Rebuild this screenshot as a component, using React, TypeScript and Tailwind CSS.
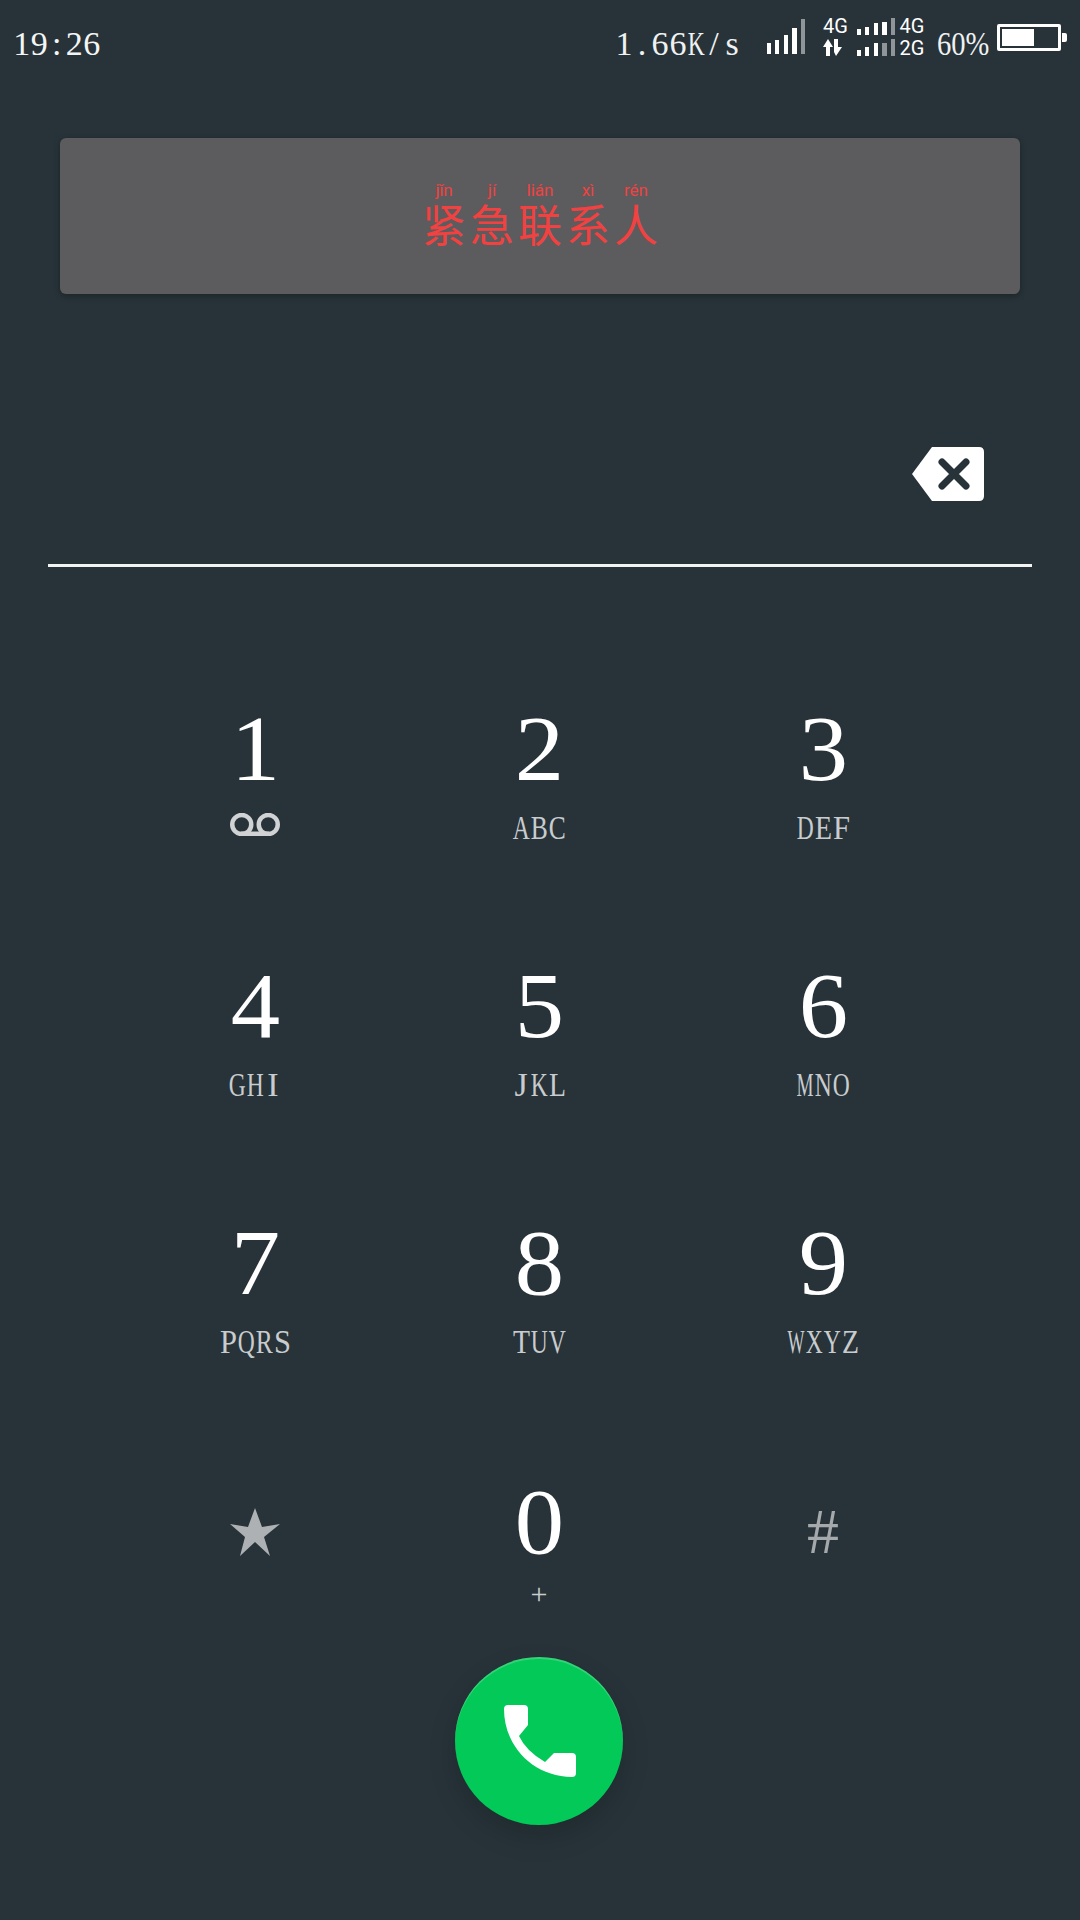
const letterWidths: Record<string, number> = {
  A: 0.722, B: 0.667, C: 0.667, D: 0.722, E: 0.611, F: 0.556, G: 0.722, H: 0.722, I: 0.333, J: 0.389, K: 0.722, L: 0.611, M: 0.889,
  N: 0.722, O: 0.722, P: 0.556, Q: 0.722, R: 0.667, S: 0.556, T: 0.611, U: 0.722, V: 0.722, W: 0.944, X: 0.722, Y: 0.722, Z: 0.611,
};

const Cells = ({ text, w, size }: { text: string; w: number; size: number }) => (
  <span className="inline-flex">
    {text.split("").map((c, i) => {
      const natural = (letterWidths[c] ?? 0) * size;
      const sx = natural > w - 1 ? (w - 1) / natural : 1;
      return (
        <span key={i} className="flex justify-center" style={{ width: w }}>
          <span className="inline-block" style={{ transform: `scaleX(${sx})` }}>{c}</span>
        </span>
      );
    })}
  </span>
);

const Bars = ({ width, height, bars }: { width: number; height: number; bars: [number, number, number, string][] }) => (
  <svg width={width} height={height} viewBox={`0 0 ${width} ${height}`} className="block">
    {bars.map(([x, y, w, f], i) => (
      <rect key={i} x={x} y={y} width={w} height={height - y} fill={f} />
    ))}
  </svg>
);

const Status = () => (
  <div className="flex h-[88px] items-start text-white font-['Liberation_Serif',serif]">
    <div className="ml-[13px] mt-[25px] text-[34px] leading-[38px] text-[#f4f5f5]">
      <Cells text="19:26" w={17.5} size={34} />
    </div>
    <div className="ml-auto flex items-start">
      <div className="mt-[25px] mr-[26px] text-[34px] leading-[38px] text-[#f0f1f1]">
        <Cells text="1.66K/s" w={18} size={34} />
      </div>
      <div className="mt-[19px] mr-[18px]">
        <Bars width={38} height={35} bars={[[0,24,4,"#fff"],[8,21,4,"#fff"],[17,16,4,"#fff"],[25,9,5,"#fff"],[34,0,4,"#8f9599"]]} />
      </div>
      <div className="mt-[15px] mr-[9px] flex w-[25px] flex-col items-center">
        <span className="font-['Roboto',sans-serif] text-[20px] leading-[22px] font-normal">4G</span>
        <svg width="19" height="17" viewBox="0 0 19 17" className="mt-[2px] block self-start">
          <path d="M5 0 L10 8 H7 V17 H3 V8 H0 Z" fill="#fff" />
          <path d="M11 0 H15 V8 H19 L13 17 L11 13 Z" fill="#fff" />
        </svg>
      </div>
      <div className="mt-[18px] mr-[5px] flex flex-col gap-[4px]">
        <Bars width={38} height={17} bars={[[0,11,4,"#fff"],[8,9,4,"#fff"],[17,5,4,"#fff"],[25,4,5,"#fff"],[34,0,4,"#8f9599"]]} />
        <Bars width={38} height={17} bars={[[0,11,4,"#fff"],[8,8,4,"#fff"],[17,4,4,"#fff"],[25,4,5,"#8f9599"],[34,0,4,"#8f9599"]]} />
      </div>
      <div className="mt-[15px] mr-[13px] flex w-[24px] flex-col items-center font-['Roboto',sans-serif] text-[20px] leading-[22px] font-normal">
        <span>4G</span>
        <span>2G</span>
      </div>
      <div className="mt-[25px] mr-[8px] w-[52px] whitespace-nowrap text-[34px] leading-[38px] text-[#f0f1f1]">
        <span className="inline-block origin-left scale-x-[0.84]">60%</span>
      </div>
      <div className="mt-[24px] mr-[13px] flex items-center">
        <div className="h-[27px] w-[64px] rounded-[2px] border-[3px] border-white p-[2px]">
          <div className="h-full w-[32px] bg-white" />
        </div>
        <div className="ml-[1px] h-[9px] w-[5px] rounded-r-[2px] bg-white" />
      </div>
    </div>
  </div>
);

const Banner = () => (
  <div className="mx-[60px] mt-[50px] flex h-[156px] items-start justify-center rounded-[6px] bg-[#5c5c5e] pt-[43px] shadow-[0_2px_6px_rgba(0,0,0,0.3)]">
    {[["紧","jǐn"],["急","jí"],["联","lián"],["系","xì"],["人","rén"]].map(([h, p]) => (
      <div key={h} className="flex w-[48px] flex-col items-center text-[#f14141]">
        <span className="font-['Roboto',sans-serif] text-[17px] leading-[18px] whitespace-nowrap">{p}</span>
        <span className="font-['Noto_Sans_CJK_SC',sans-serif] text-[44px] leading-[48px]">{h}</span>
      </div>
    ))}
  </div>
);

const Backspace = () => (
  <div className="mt-[153px] flex justify-end pr-[96px]">
    <svg width="72" height="54" viewBox="0 0 72 54" className="block">
      <path d="M20 0 H67 Q72 0 72 5 V49 Q72 54 67 54 H20 L0 27 Z" fill="#fff" />
      <path d="M30 15 L54 39 M54 15 L30 39" stroke="#273339" strokeWidth="7" strokeLinecap="round" fill="none" />
    </svg>
  </div>
);

const Digit = ({ d }: { d: string }) => (
  <div className="h-[104px] text-center font-['Liberation_Serif',serif] text-[94px] leading-[108px] text-white">
    <span className="inline-block scale-x-[1.05]">{d}</span>
  </div>
);

const Label = ({ t }: { t: string }) => (
  <div className="mt-[12px] h-[36px] whitespace-nowrap font-['Liberation_Serif',serif] text-[34px] leading-[36px] text-[#c9ccce]">
    <Cells text={t} w={18} size={34} />
  </div>
);

const keys: [string, string][] = [
  ["2","ABC"],["3","DEF"],["4","GHI"],["5","JKL"],["6","MNO"],["7","PQRS"],["8","TUV"],["9","WXYZ"],
];

const Key = ({ d, t }: { d: string; t: string }) => (
  <div className="flex flex-col items-center">
    <Digit d={d} />
    <Label t={t} />
  </div>
);

const App = () => (
  <div className="h-[1920px] w-[1080px] overflow-hidden bg-[#273339]">
    <Status />
    <Banner />
    <Backspace />
    <div className="mx-[48px] mt-[63px] h-[3px] bg-[#f2f3f3]" />
    <div className="mx-[113px] mt-[127px] grid grid-cols-[284px_284px_284px] grid-rows-[257px_257px_257px_192px]">
      <div className="flex flex-col items-center">
        <Digit d="1" />
        <svg width="50" height="23" viewBox="0 0 50 23" className="mt-[15px] block">
          <circle cx="11.75" cy="11.5" r="9.5" fill="none" stroke="#d0d2d4" strokeWidth="4.5" />
          <circle cx="38.25" cy="11.5" r="9.5" fill="none" stroke="#d0d2d4" strokeWidth="4.5" />
          <rect x="11" y="18.5" width="28" height="4.5" fill="#d0d2d4" />
        </svg>
      </div>
      {keys.map(([d, t]) => <Key key={d} d={d} t={t} />)}
      <div className="flex justify-center pt-[43px]">
        <svg width="50" height="48" viewBox="0 0 50 48" className="block h-[48px]" fill="#aeb1b4">
          <path d="M25 0 L32 19 L50 16 L34 29 L40 48 L25 34 L10 48 L15 29 L0 16 L18 19 Z" />
        </svg>
      </div>
      <div className="flex flex-col items-center pt-[2px]">
        <Digit d="0" />
        <div className="mt-[5px] font-['Liberation_Serif',serif] text-[30px] leading-[36px] text-[#c9ccce]">+</div>
      </div>
      <div className="flex justify-center pt-[33px] font-['Liberation_Serif',serif] text-[64px] leading-[68px] text-[#a5a9ac]">#</div>
    </div>
    <div className="flex justify-center pr-[2px]">
      <div className="flex h-[168px] w-[168px] items-center justify-center rounded-full bg-[#03c958] pl-[2px] shadow-[0_12px_28px_rgba(0,0,0,0.16),inset_0_2px_0_rgba(255,255,255,0.2)]">
        <svg width="72" height="72" viewBox="0 0 72 72" className="block">
          <path d="M4 0 H20 Q24 0 24 4 V20 L15 31 Q22 46 41 57 L50 48 H68 Q72 48 72 52 V68 Q72 72 68 72 C30 72 0 42 0 4 Q0 0 4 0 Z" fill="#fff" />
        </svg>
      </div>
    </div>
  </div>
);

export default App;
